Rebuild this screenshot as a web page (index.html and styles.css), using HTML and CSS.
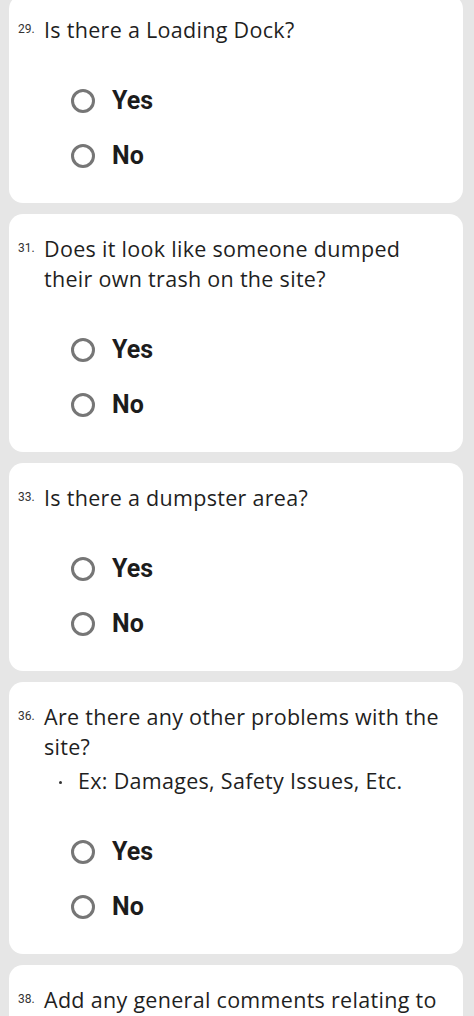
FILE: index.html
```html
<!DOCTYPE html>
<html lang="en">
<head>
<meta charset="utf-8">
<title>Site Survey</title>
<link rel="stylesheet" href="styles.css">
</head>
<body>
<div class="list">
  <section class="card">
    <div class="q"><span class="num">29.</span><span class="qt">Is there a Loading Dock?</span></div>
    <div class="opts">
      <label class="opt"><span class="radio"></span><span class="ol">Yes</span></label>
      <label class="opt"><span class="radio"></span><span class="ol">No</span></label>
    </div>
  </section>
  <section class="card">
    <div class="q"><span class="num">31.</span><span class="qt">Does it look like someone dumped their own trash on the site?</span></div>
    <div class="opts">
      <label class="opt"><span class="radio"></span><span class="ol">Yes</span></label>
      <label class="opt"><span class="radio"></span><span class="ol">No</span></label>
    </div>
  </section>
  <section class="card">
    <div class="q"><span class="num">33.</span><span class="qt">Is there a dumpster area?</span></div>
    <div class="opts">
      <label class="opt"><span class="radio"></span><span class="ol">Yes</span></label>
      <label class="opt"><span class="radio"></span><span class="ol">No</span></label>
    </div>
  </section>
  <section class="card">
    <div class="q"><span class="num">36.</span><div class="qt">Are there any other problems with the site?
      <ul class="hint"><li>Ex: Damages, Safety Issues, Etc.</li></ul></div></div>
    <div class="opts">
      <label class="opt"><span class="radio"></span><span class="ol">Yes</span></label>
      <label class="opt"><span class="radio"></span><span class="ol">No</span></label>
    </div>
  </section>
  <section class="card">
    <div class="q"><span class="num">38.</span><span class="qt">Add any general comments relating to the site</span></div>
  </section>
</div>
</body>
</html>
```
FILE: styles.css
```css
html, body {
  margin: 0;
  padding: 0;
  background: #e6e6e6;
  overflow: hidden;
  height: 1016px;
}
body {
  font-family: "Open Sans", Roboto, Arial, sans-serif;
  color: #222;
}
.list {
  display: flex;
  flex-direction: column;
  gap: 10.5px;
  margin-top: -5.5px;
  padding: 0 11px 0 9px;
}
.card {
  background: #fff;
  border-radius: 14px;
  padding: 20.5px 20px 20px 9px;
}
.q {
  display: flex;
  align-items: flex-start;
}
.num {
  flex: 0 0 auto;
  width: 26px;
  font-family: Roboto, "Open Sans", sans-serif;
  font-size: 12px;
  line-height: 30px;
  color: #333;
  position: relative;
  top: -1px;
}
.qt {
  font-size: 21.5px;
  letter-spacing: 0.3px;
  line-height: 30px;
  color: #1f1f1f;
}
.hint {
  margin: 4px 0 0 0;
  padding: 0 0 0 34px;
  list-style: none;
}
.hint li {
  position: relative;
}
.hint li::before {
  content: "";
  position: absolute;
  left: -19px;
  top: 15px;
  width: 3px;
  height: 3px;
  border-radius: 50%;
  background: #333;
}
.opts {
  display: flex;
  flex-direction: column;
  margin-top: 28px;
  padding-left: 53px;
}
.opt {
  display: flex;
  align-items: center;
  height: 55px;
  gap: 17px;
}
.radio {
  box-sizing: border-box;
  width: 24px;
  height: 24px;
  border: 3px solid #767676;
  border-radius: 50%;
  flex: 0 0 auto;
}
.ol {
  font-family: Roboto, Arial, sans-serif;
  font-size: 25px;
  font-weight: 700;
  color: #1c1c1c;
}
```
